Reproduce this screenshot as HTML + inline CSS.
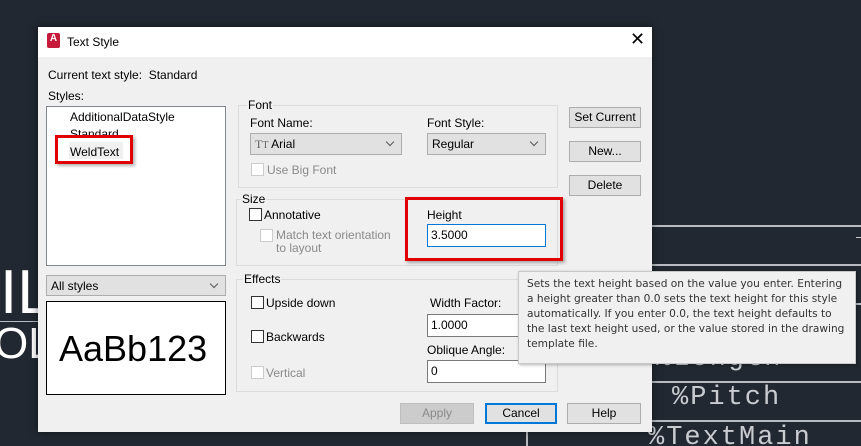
<!DOCTYPE html>
<html><head><style>
*{box-sizing:border-box;margin:0;padding:0}
html,body{width:861px;height:446px;overflow:hidden}
body{background:#222831;font-family:"Liberation Sans",sans-serif;font-size:12px;color:#000;position:relative}
.a{position:absolute}
.hl{position:absolute;height:2px;background:#b8bcc2}
.cad{position:absolute;color:#c8cbd0;font-family:"Liberation Mono",monospace;font-size:27px;letter-spacing:2px}
.dlg{left:38px;top:27px;width:614px;height:405px;background:#f0f0f0;box-shadow:0 0 8px rgba(0,0,0,.5)}
.grp{position:absolute;border:1px solid #dcdcdc}
.lg{position:absolute;background:#f0f0f0;padding:0 1px;top:-8px;left:8px}
.btn{position:absolute;background:#e1e1e1;border:1px solid #adadad;text-align:center;line-height:19px}
.inp{position:absolute;background:#fff;border:1px solid #7a7a7a;padding-left:3px;line-height:20px}
.cmb{position:absolute;background:#e1e1e1;border:1px solid #adadad;padding-left:4px;line-height:20px}
.cmb:after{content:"";position:absolute;right:8px;top:5px;width:5px;height:5px;border-right:1px solid #555;border-bottom:1px solid #555;transform:rotate(45deg)}
.cb{position:absolute;width:13px;height:13px;border:1px solid #333;background:#fff}
.cb.d{border-color:#ccc}
.gray{color:#8a8a8a}
.red{position:absolute;border:3px solid #e00000;box-shadow:2px 2px 3px rgba(0,0,0,.3)}
</style></head><body>
<div class="a" style="left:0;top:262px;color:#fff;font-size:62px;font-family:'Liberation Sans',sans-serif;line-height:62px">IL</div>
<div class="hl" style="left:0;top:321px;width:38px;height:1px"></div>
<div class="a" style="left:-6px;top:322px;color:#fff;font-size:44px;line-height:44px">OL</div>
<div class="hl" style="left:652px;top:225px;width:209px"></div>
<div class="hl" style="left:652px;top:264px;width:209px"></div>
<div class="hl" style="left:652px;top:303px;width:209px"></div>
<div class="hl" style="left:652px;top:381px;width:209px"></div>
<div class="hl" style="left:527px;top:420px;width:334px"></div>
<div class="a" style="left:526px;top:420px;width:2px;height:26px;background:#b8bcc2"></div>
<div class="a" style="left:856px;top:237px;width:5px;height:1px;background:#ccc"></div>
<div class="cad" style="left:655px;top:344px">%Length</div>
<div class="cad" style="left:672px;top:383px">%Pitch</div>
<div class="cad" style="left:648px;top:423px">%TextMain</div>

<div class="a dlg">
 <div class="a" style="left:0;top:0;width:614px;height:30px;background:#fff"></div>
 <div class="a" style="left:9px;top:6px;width:13px;height:15px;background:#c51a3a;border-radius:2px;color:#fff;font-size:10px;font-weight:bold;text-align:center;line-height:11px">A</div>
 <div class="a" style="left:29px;top:8px;font-size:12px">Text Style</div>
 <div class="a" style="left:592px;top:2px;font-size:18px;font-weight:300">✕</div>

 <div class="a" style="left:10px;top:41px">Current text style:&nbsp; Standard</div>
 <div class="a" style="left:10px;top:62px">Styles:</div>
 <div class="a" style="left:8px;top:79px;width:180px;height:160px;background:#fff;border:1px solid #828790"></div>
 <div class="a" style="left:32px;top:83px">AdditionalDataStyle</div>
 <div class="a" style="left:32px;top:100px">Standard</div>
 <div class="a" style="left:31px;top:115px;width:54px;height:17px;background:#f0f0f0"></div>
 <div class="a" style="left:32px;top:118px">WeldText</div>
 <div class="red" style="left:17px;top:108px;width:78px;height:29px"></div>

 <div class="cmb" style="left:8px;top:248px;width:180px;height:21px">All styles</div>
 <div class="a" style="left:8px;top:274px;width:180px;height:94px;background:#fff;border:1px solid #000"></div>
 <div class="a" style="left:21px;top:300px;font-size:36px;line-height:44px">AaBb123</div>

 <div class="grp" style="left:200px;top:78px;width:320px;height:83px"><span class="lg">Font</span></div>
 <div class="a" style="left:212px;top:89px">Font Name:</div>
 <div class="cmb" style="left:212px;top:106px;width:152px;height:22px"><span style="color:#666;font-family:'Liberation Serif',serif">T<span style="font-size:10px">T</span></span> Arial</div>
 <div class="cb d" style="left:213px;top:136px"></div>
 <div class="a gray" style="left:229px;top:136px">Use Big Font</div>
 <div class="a" style="left:389px;top:89px">Font Style:</div>
 <div class="cmb" style="left:389px;top:106px;width:119px;height:22px">Regular</div>

 <div class="grp" style="left:198px;top:172px;width:322px;height:67px"><span class="lg" style="left:4px">Size</span></div>
 <div class="cb" style="left:211px;top:181px"></div>
 <div class="a" style="left:226px;top:181px">Annotative</div>
 <div class="cb d" style="left:222px;top:202px"></div>
 <div class="a gray" style="left:238px;top:202px;line-height:13px">Match text orientation<br>to layout</div>
 <div class="a" style="left:389px;top:181px">Height</div>
 <div class="inp" style="left:389px;top:197px;width:119px;height:23px;border-color:#0078d7">3.5000</div>
 <div class="red" style="left:367px;top:170px;width:158px;height:64px"></div>

 <div class="grp" style="left:198px;top:252px;width:322px;height:113px"><span class="lg" style="left:6px">Effects</span></div>
 <div class="cb" style="left:213px;top:269px"></div>
 <div class="a" style="left:228px;top:269px">Upside down</div>
 <div class="cb" style="left:213px;top:303px"></div>
 <div class="a" style="left:228px;top:303px">Backwards</div>
 <div class="cb d" style="left:213px;top:339px"></div>
 <div class="a gray" style="left:228px;top:339px">Vertical</div>
 <div class="a" style="left:392px;top:269px">Width Factor:</div>
 <div class="inp" style="left:389px;top:287px;width:119px;height:23px">1.0000</div>
 <div class="a" style="left:389px;top:316px">Oblique Angle:</div>
 <div class="inp" style="left:389px;top:333px;width:119px;height:23px">0</div>

 <div class="btn" style="left:531px;top:80px;width:72px;height:21px">Set Current</div>
 <div class="btn" style="left:531px;top:114px;width:72px;height:21px">New...</div>
 <div class="btn" style="left:531px;top:148px;width:72px;height:21px">Delete</div>
 <div class="btn gray" style="left:362px;top:376px;width:74px;height:21px;background:#ccc;border-color:#bfbfbf">Apply</div>
 <div class="btn" style="left:447px;top:376px;width:72px;height:21px;border:2px solid #0078d7;line-height:17px">Cancel</div>
 <div class="btn" style="left:529px;top:376px;width:74px;height:21px">Help</div>
</div>

<div class="a" style="left:518px;top:271px;width:338px;height:93px;background:#f0f0f0;border:1px solid #c8c8c8;box-shadow:1px 1px 3px rgba(0,0,0,.3);padding:5px 8px;font-family:'DejaVu Sans',sans-serif;font-size:10.6px;line-height:15px;color:#333">Sets the text height based on the value you enter. Entering a height greater than 0.0 sets the text height for this style automatically. If you enter 0.0, the text height defaults to the last text height used, or the value stored in the drawing template file.</div>
</body></html>
